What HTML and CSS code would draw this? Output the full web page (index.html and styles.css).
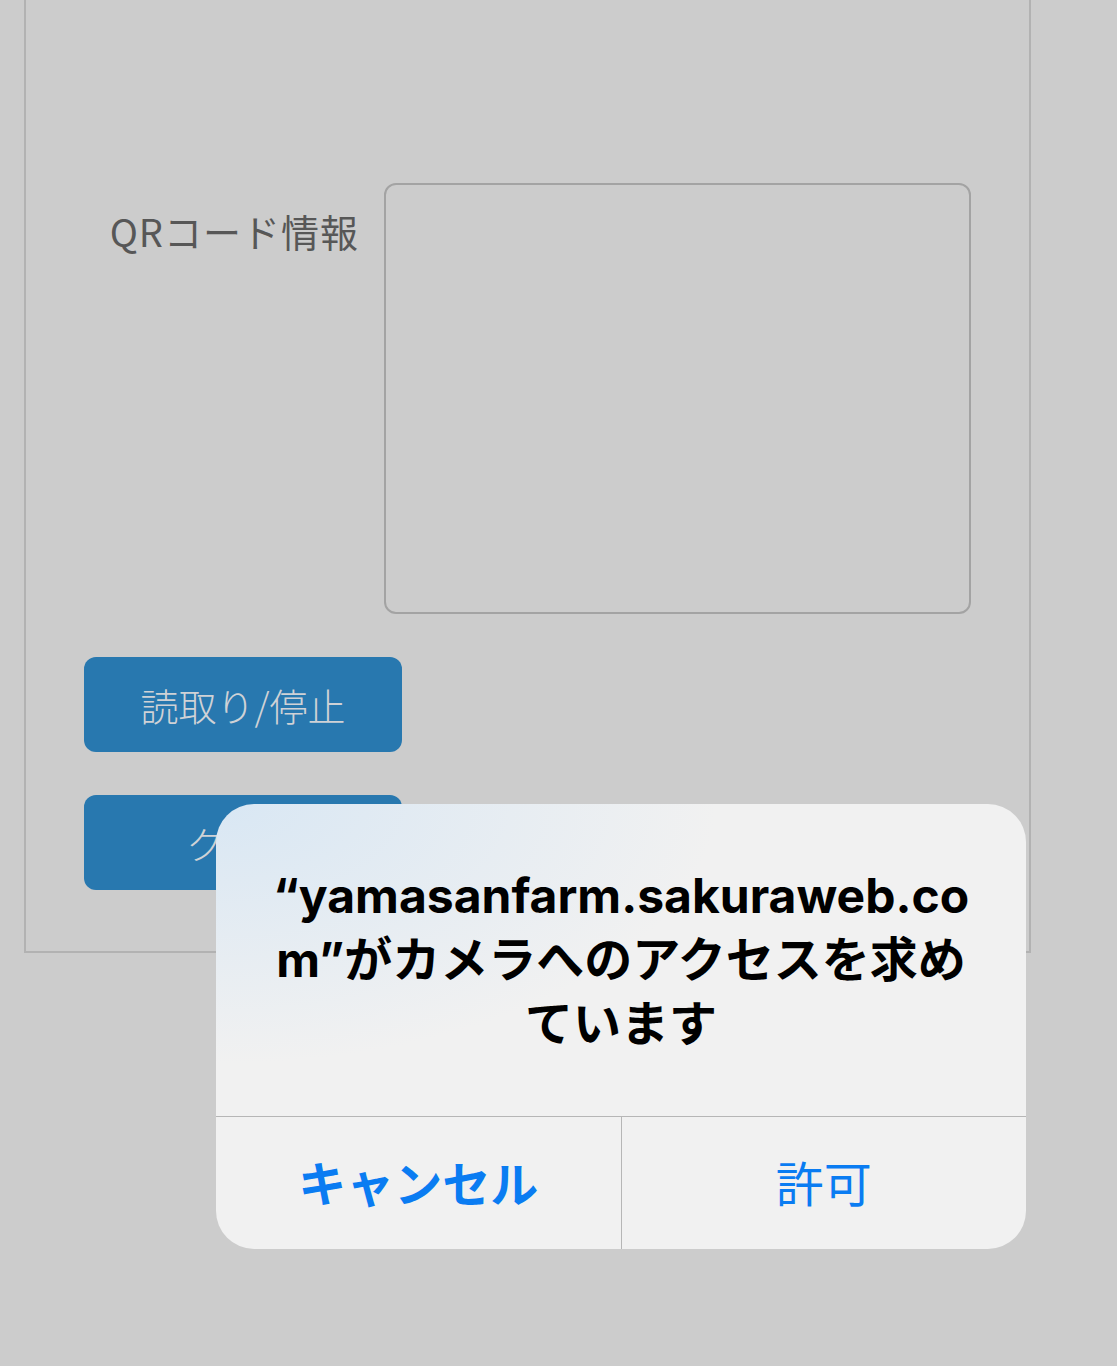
FILE: index.html
```html
<!DOCTYPE html>
<html lang="ja">
<head>
<meta charset="utf-8">
<title>QR</title>
<link rel="stylesheet" href="styles.css">
</head>
<body>
<div class="panel">
  <div class="field">
    <label class="label" for="qr">QRコード情報</label>
    <textarea id="qr" class="qrbox"></textarea>
  </div>
  <div class="actions">
    <button class="btn">読取り/停止</button>
    <button class="btn">クリア</button>
  </div>
</div>

<div class="alert" role="alertdialog">
  <div class="alert-title">
    <span class="line">“yamasanfarm.sakuraweb.co</span>
    <span class="line">m”がカメラへのアクセスを求め</span>
    <span class="line">ています</span>
  </div>
  <div class="alert-buttons">
    <button class="alert-btn cancel">キャンセル</button>
    <button class="alert-btn allow">許可</button>
  </div>
</div>
</body>
</html>
```

FILE: styles.css
```css
html, body {
  margin: 0;
  padding: 0;
  background: #cccccc;
  width: 1117px;
  height: 1366px;
  overflow: hidden;
}
body {
  font-family: "Noto Sans CJK JP", "Noto Sans", sans-serif;
}
.panel {
  margin-left: 24px;
  width: 1003px;
  height: 951px;
  border: 2px solid #b2b2b2;
  border-top: none;
  display: flex;
  flex-direction: column;
}
.field {
  display: flex;
  gap: 25px;
  padding-top: 183px;
}
.label {
  width: 333px;
  text-align: right;
  font-size: 38px;
  letter-spacing: 1px;
  font-weight: 400;
  line-height: 52px;
  margin-top: 22px;
  color: #575757;
}
.qrbox {
  box-sizing: border-box;
  width: 587px;
  height: 431px;
  border: 2px solid #a3a3a3;
  border-radius: 12px;
  background: #cccccc;
  resize: none;
  outline: none;
  margin: 0;
}
.actions {
  display: flex;
  flex-direction: column;
  gap: 43px;
  padding-top: 43px;
  padding-left: 58px;
}
.btn {
  box-sizing: border-box;
  width: 318px;
  height: 95px;
  border: none;
  border-radius: 12px;
  background: #2878af;
  color: #cfd2d6;
  font-family: "Noto Sans CJK JP", sans-serif;
  font-size: 38px;
  font-weight: 300;
  padding: 0;
}
.alert {
  position: absolute;
  left: 216px;
  top: 804px;
  width: 810px;
  height: 445px;
  border-radius: 38px;
  overflow: hidden;
  background:
    radial-gradient(ellipse 500px 260px at 0% 0%, rgba(214,230,244,0.9), rgba(241,241,241,0) 100%),
    #f1f1f1;
  display: flex;
  flex-direction: column;
}
.alert-title {
  box-sizing: border-box;
  height: 312px;
  padding-top: 60px;
  text-align: center;
  font-family: "Inter", "Noto Sans CJK JP", sans-serif;
  font-weight: 700;
  font-size: 48px;
  line-height: 64px;
  color: #000;
}
.line {
  display: block;
  white-space: nowrap;
}
.alert-buttons {
  flex: 1;
  display: flex;
  border-top: 1px solid #b6b6b6;
}
.alert-btn {
  flex: 1;
  border: none;
  background: transparent;
  color: #0a7cf2;
  font-family: "Noto Sans CJK JP", sans-serif;
  font-size: 48px;
  padding: 0 0 4px 0;
}
.cancel {
  font-weight: 700;
  border-right: 1px solid #b6b6b6;
}
.allow {
  font-weight: 400;
}
```
